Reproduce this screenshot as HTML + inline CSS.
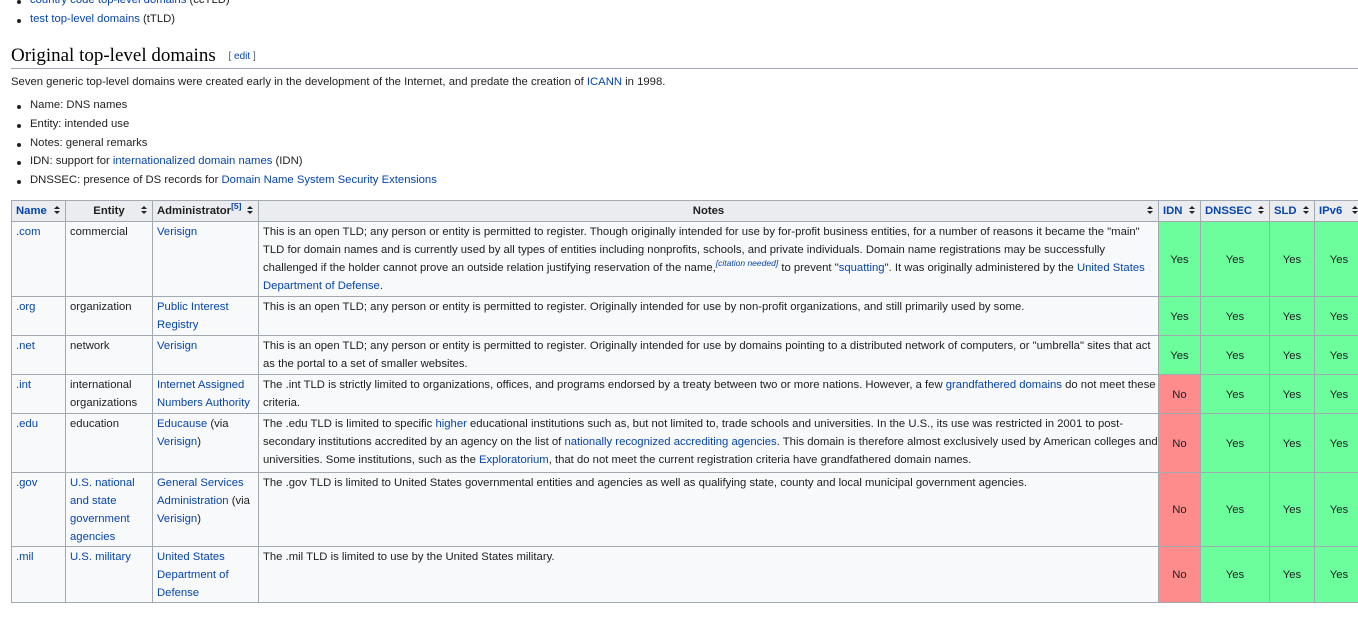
<!DOCTYPE html>
<html><head><meta charset="utf-8">
<style>
body{margin:0;background:#fff;font-family:"Liberation Sans",Arial,sans-serif;font-size:11.3px;color:#202122;width:1358px;height:617px;overflow:hidden;position:relative}
a{color:#0645ad;text-decoration:none}
.abs{position:absolute;white-space:nowrap}
ul{margin:0;padding:0;list-style:none}
li{position:absolute;left:30px;white-space:nowrap}
li:before{content:"";position:absolute;left:-13px;top:6px;width:4px;height:4px;border-radius:50%;background:#202122}
h2{position:absolute;left:11px;top:45px;margin:0;font-family:"Liberation Serif",serif;font-weight:normal;font-size:19px;color:#000;width:1347px;border-bottom:1px solid #a2a9b1;padding-bottom:1px;white-space:nowrap}
h2 small{font-family:"Liberation Sans",sans-serif;font-size:10px;color:#54595d;margin-left:8px;vertical-align:2px}
table{position:absolute;left:11px;top:200px;border-collapse:collapse;table-layout:fixed;background:#f8f9fa;width:1352px}
td,th{border:1px solid #a2a9b1;padding:1px 4px 0 4px;vertical-align:top;line-height:18px;white-space:nowrap;overflow:hidden}
th{background:#eaecf0;font-weight:bold;height:19px;padding:1px 4px 0;text-align:center;position:relative}
th.l{text-align:left}
th:after{content:"";position:absolute;right:5px;top:5px;border:3px solid transparent;border-bottom:3px solid #202122;border-top:0;}
th:before{content:"";position:absolute;right:5px;top:10px;border:3px solid transparent;border-top:3px solid #202122;border-bottom:0;}
td.y,td.n{vertical-align:middle;text-align:center}
td.y{background:#6cfd9c}
td.n{background:#fe8c8c}
sup{font-size:8.5px;line-height:0}
</style></head><body>
<ul>
<li style="top:-6px"><a>country code top-level domains</a> (ccTLD)</li>
<li style="top:13px"><a>test top-level domains</a> (tTLD)</li>
</ul>
<h2>Original top-level domains <small>[ <a>edit</a> ]</small></h2>
<div class="abs" style="left:11px;top:76px">Seven generic top-level domains were created early in the development of the Internet, and predate the creation of <a>ICANN</a> in 1998.</div>
<ul>
<li style="top:99px">Name: DNS names</li>
<li style="top:118px">Entity: intended use</li>
<li style="top:137px">Notes: general remarks</li>
<li style="top:155px">IDN: support for <a>internationalized domain names</a> (IDN)</li>
<li style="top:174px">DNSSEC: presence of DS records for <a>Domain Name System Security Extensions</a></li>
</ul>
<table>
<colgroup><col style="width:54px"><col style="width:87px"><col style="width:106px"><col style="width:900px"><col style="width:42px"><col style="width:69px"><col style="width:45px"><col style="width:49px"></colgroup>
<tr style="height:21px"><th class="l"><a>Name</a></th><th>Entity</th><th class="l">Administrator<sup><a>[5]</a></sup></th><th>Notes</th><th class="l"><a>IDN</a></th><th class="l"><a>DNSSEC</a></th><th class="l"><a>SLD</a></th><th class="l"><a>IPv6</a></th></tr>
<tr style="height:75px"><td><a>.com</a></td><td>commercial</td><td><a>Verisign</a></td><td>This is an open TLD; any person or entity is permitted to register. Though originally intended for use by for-profit business entities, for a number of reasons it became the "main"<br>TLD for domain names and is currently used by all types of entities including nonprofits, schools, and private individuals. Domain name registrations may be successfully<br>challenged if the holder cannot prove an outside relation justifying reservation of the name,<sup><i><a>[citation needed]</a></i></sup> to prevent "<a>squatting</a>". It was originally administered by the <a>United States</a><br><a>Department of Defense</a>.</td><td class="y">Yes</td><td class="y">Yes</td><td class="y">Yes</td><td class="y">Yes</td></tr>
<tr style="height:39px"><td><a>.org</a></td><td>organization</td><td><a>Public Interest<br>Registry</a></td><td>This is an open TLD; any person or entity is permitted to register. Originally intended for use by non-profit organizations, and still primarily used by some.</td><td class="y">Yes</td><td class="y">Yes</td><td class="y">Yes</td><td class="y">Yes</td></tr>
<tr style="height:39px"><td><a>.net</a></td><td>network</td><td><a>Verisign</a></td><td>This is an open TLD; any person or entity is permitted to register. Originally intended for use by domains pointing to a distributed network of computers, or "umbrella" sites that act<br>as the portal to a set of smaller websites.</td><td class="y">Yes</td><td class="y">Yes</td><td class="y">Yes</td><td class="y">Yes</td></tr>
<tr style="height:39px"><td><a>.int</a></td><td>international<br>organizations</td><td><a>Internet Assigned<br>Numbers Authority</a></td><td>The .int TLD is strictly limited to organizations, offices, and programs endorsed by a treaty between two or more nations. However, a few <a>grandfathered domains</a> do not meet these<br>criteria.</td><td class="n">No</td><td class="y">Yes</td><td class="y">Yes</td><td class="y">Yes</td></tr>
<tr style="height:59px"><td><a>.edu</a></td><td>education</td><td><a>Educause</a> (via<br><a>Verisign</a>)</td><td>The .edu TLD is limited to specific <a>higher</a> educational institutions such as, but not limited to, trade schools and universities. In the U.S., its use was restricted in 2001 to post-<br>secondary institutions accredited by an agency on the list of <a>nationally recognized accrediting agencies</a>. This domain is therefore almost exclusively used by American colleges and<br>universities. Some institutions, such as the <a>Exploratorium</a>, that do not meet the current registration criteria have grandfathered domain names.</td><td class="n">No</td><td class="y">Yes</td><td class="y">Yes</td><td class="y">Yes</td></tr>
<tr style="height:74px"><td><a>.gov</a></td><td><a>U.S. national<br>and state<br>government<br>agencies</a></td><td><a>General Services<br>Administration</a> (via<br><a>Verisign</a>)</td><td>The .gov TLD is limited to United States governmental entities and agencies as well as qualifying state, county and local municipal government agencies.</td><td class="n">No</td><td class="y">Yes</td><td class="y">Yes</td><td class="y">Yes</td></tr>
<tr style="height:56px"><td><a>.mil</a></td><td><a>U.S. military</a></td><td><a>United States<br>Department of<br>Defense</a></td><td>The .mil TLD is limited to use by the United States military.</td><td class="n">No</td><td class="y">Yes</td><td class="y">Yes</td><td class="y">Yes</td></tr>
</table>
</body></html>
